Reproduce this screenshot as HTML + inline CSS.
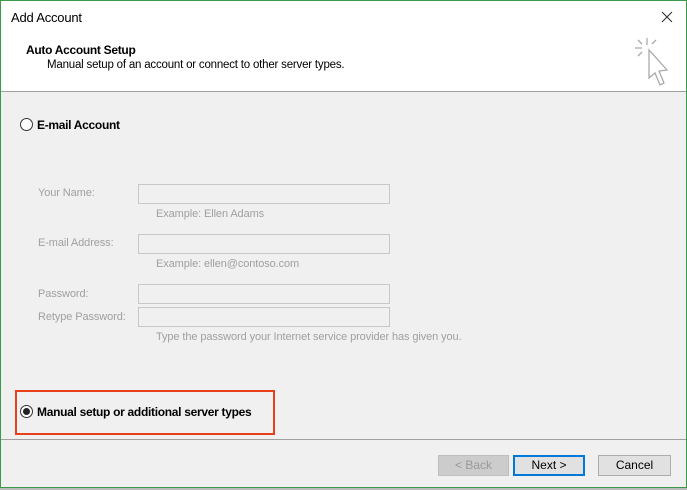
<!DOCTYPE html>
<html><head><style>
*{margin:0;padding:0;box-sizing:border-box}
body{width:687px;height:490px;background:#f0f0f0;font-family:"Liberation Sans",sans-serif;font-size:12px;position:relative;overflow:hidden}
.win{position:absolute;left:0;top:0;width:687px;height:488px;border:1px solid #3a9a4a;background:#f0f0f0}
.bot{position:absolute;left:0;top:488px;width:687px;height:2px;background:#bbb}
.a{position:absolute;white-space:nowrap}
.hdr{position:absolute;left:0;top:0;width:685px;height:91px;background:#fff;border-bottom:1px solid #a0a0a0}
.lbl{color:#a0a0a0;font-size:11px;letter-spacing:-0.1px}
.in{position:absolute;left:137px;width:252px;height:20px;border:1px solid #c8c8c8;background:#f0f0f0}
.btn{position:absolute;top:454px;height:21px;border:1px solid #adadad;background:#e1e1e1;text-align:center;line-height:19px;font-size:12px}
.rad{position:absolute;width:13px;height:13px;border:1px solid #333;border-radius:50%;background:#fff}
</style></head><body>
<div class="win">
<div class="hdr"></div>
<div class="a" style="left:10px;top:9px;font-size:13px;color:#000;letter-spacing:-0.2px">Add Account</div>
<svg class="a" style="left:660px;top:10px" width="12" height="12" viewBox="0 0 12 12"><path d="M1 1L11 11M11 1L1 11" stroke="#333" stroke-width="1.1"/></svg>
<div class="a" style="left:25px;top:42px;font-weight:bold;font-size:12px;letter-spacing:-0.3px">Auto Account Setup</div>
<div class="a" style="left:46px;top:58px;font-size:11.5px;letter-spacing:-0.2px">Manual setup of an account or connect to other server types.</div>
<svg class="a" style="left:629px;top:37px" width="40" height="52" viewBox="0 0 40 52" fill="none" stroke="#aaa" stroke-width="1.3">
<path d="M17 0v7M5 10h7M8 2l4 4M26 2l-4 4M8 18l4-4"/>
<path d="M19 12L19 40L25 35L30 47L34 45L29 33L37 32Z" fill="#fff"/>
</svg>
<div class="rad" style="left:19px;top:117px"></div>
<div class="a" style="left:36px;top:117px;font-weight:bold;letter-spacing:-0.3px">E-mail Account</div>
<div class="a lbl" style="left:37px;top:186px">Your Name:</div>
<div class="in" style="top:183px"></div>
<div class="a lbl" style="left:155px;top:207px">Example: Ellen Adams</div>
<div class="a lbl" style="left:37px;top:236px">E-mail Address:</div>
<div class="in" style="top:233px"></div>
<div class="a lbl" style="left:155px;top:257px">Example: ellen@contoso.com</div>
<div class="a lbl" style="left:37px;top:287px">Password:</div>
<div class="in" style="top:283px"></div>
<div class="a lbl" style="left:37px;top:310px">Retype Password:</div>
<div class="in" style="top:306px"></div>
<div class="a lbl" style="left:155px;top:330px">Type the password your Internet service provider has given you.</div>
<div class="a" style="left:14px;top:389px;width:260px;height:45px;border:2px solid #e8401c"></div>
<div class="rad" style="left:19px;top:404px"></div>
<div class="a" style="left:22px;top:407px;width:7px;height:7px;border-radius:50%;background:#222"></div>
<div class="a" style="left:36px;top:404px;font-weight:bold;letter-spacing:-0.3px">Manual setup or additional server types</div>
<div class="a" style="left:0;top:438px;width:685px;height:1px;background:#a0a0a0"></div>
<div class="btn" style="left:437px;width:71px;color:#999;background:#ccc;border-color:#bfbfbf">&lt; Back</div>
<div class="btn" style="left:512px;width:72px;border:2px solid #0078d7;line-height:17px">Next &gt;</div>
<div class="btn" style="left:597px;width:73px">Cancel</div>
</div>
<div class="bot"></div>
</body></html>
